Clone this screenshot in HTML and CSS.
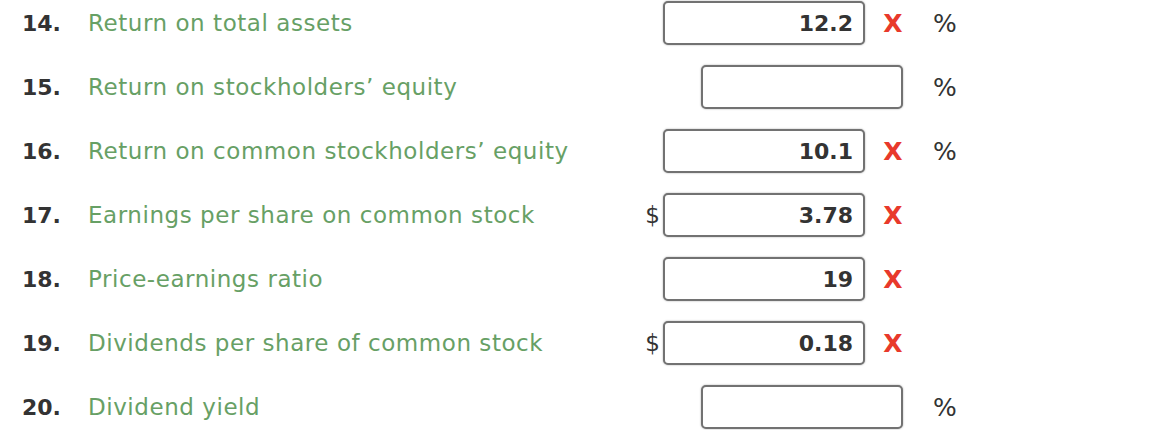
FILE: index.html
```html
<!DOCTYPE html>
<html lang="en">
<head>
<meta charset="utf-8">
<title>Ratios</title>
<link rel="stylesheet" href="styles.css">
</head>
<body>
<div class="sheet">
  <div class="row">
    <span class="num">14.</span>
    <span class="label">Return on total assets</span>
    <span class="answer"><span class="box">12.2</span><span class="mark">X</span></span>
    <span class="unit">%</span>
  </div>
  <div class="row">
    <span class="num">15.</span>
    <span class="label">Return on stockholders’ equity</span>
    <span class="answer"><span class="box"></span></span>
    <span class="unit">%</span>
  </div>
  <div class="row">
    <span class="num">16.</span>
    <span class="label">Return on common stockholders’ equity</span>
    <span class="answer"><span class="box">10.1</span><span class="mark">X</span></span>
    <span class="unit">%</span>
  </div>
  <div class="row">
    <span class="num">17.</span>
    <span class="label">Earnings per share on common stock</span>
    <span class="answer"><span class="cur">$</span><span class="box">3.78</span><span class="mark">X</span></span>
    <span class="unit"></span>
  </div>
  <div class="row">
    <span class="num">18.</span>
    <span class="label">Price-earnings ratio</span>
    <span class="answer"><span class="box">19</span><span class="mark">X</span></span>
    <span class="unit"></span>
  </div>
  <div class="row">
    <span class="num">19.</span>
    <span class="label">Dividends per share of common stock</span>
    <span class="answer"><span class="cur">$</span><span class="box">0.18</span><span class="mark">X</span></span>
    <span class="unit"></span>
  </div>
  <div class="row">
    <span class="num">20.</span>
    <span class="label">Dividend yield</span>
    <span class="answer"><span class="box"></span></span>
    <span class="unit">%</span>
  </div>
</div>
</body>
</html>
```

FILE: styles.css
```css
html, body {
  margin: 0;
  padding: 0;
  background: #ffffff;
}

body {
  font-family: "DejaVu Sans", Verdana, sans-serif;
  font-size: 22px;
  color: #333333;
}

.sheet {
  width: 1000px;
  box-sizing: border-box;
  padding-left: 22px;
  display: flex;
  flex-direction: column;
  gap: 18px;
}

.row {
  height: 46px;
  display: grid;
  grid-template-columns: 66px 1fr auto 97px;
  align-items: center;
}

.num {
  font-weight: bold;
  color: #333333;
}

.label {
  color: #67a065;
  font-size: 23px;
  letter-spacing: 0.55px;
}

.answer {
  display: flex;
  align-items: center;
  justify-content: flex-end;
}

.cur {
  margin-right: 3px;
  font-size: 23px;
  color: #333333;
}

.box {
  width: 202px;
  height: 44px;
  box-sizing: border-box;
  border: 2px solid #727272;
  border-radius: 5px;
  box-shadow: 0 0 2px rgba(0, 0, 0, 0.35);
  background: #ffffff;
  display: flex;
  align-items: center;
  justify-content: flex-end;
  padding-right: 10px;
  font-weight: bold;
  color: #333333;
}

.mark {
  width: 20px;
  margin-left: 18px;
  text-align: center;
  font-weight: bold;
  font-size: 25px;
  color: #e8392b;
}

.unit {
  padding-left: 30px;
  font-size: 25px;
  color: #333333;
}
```
